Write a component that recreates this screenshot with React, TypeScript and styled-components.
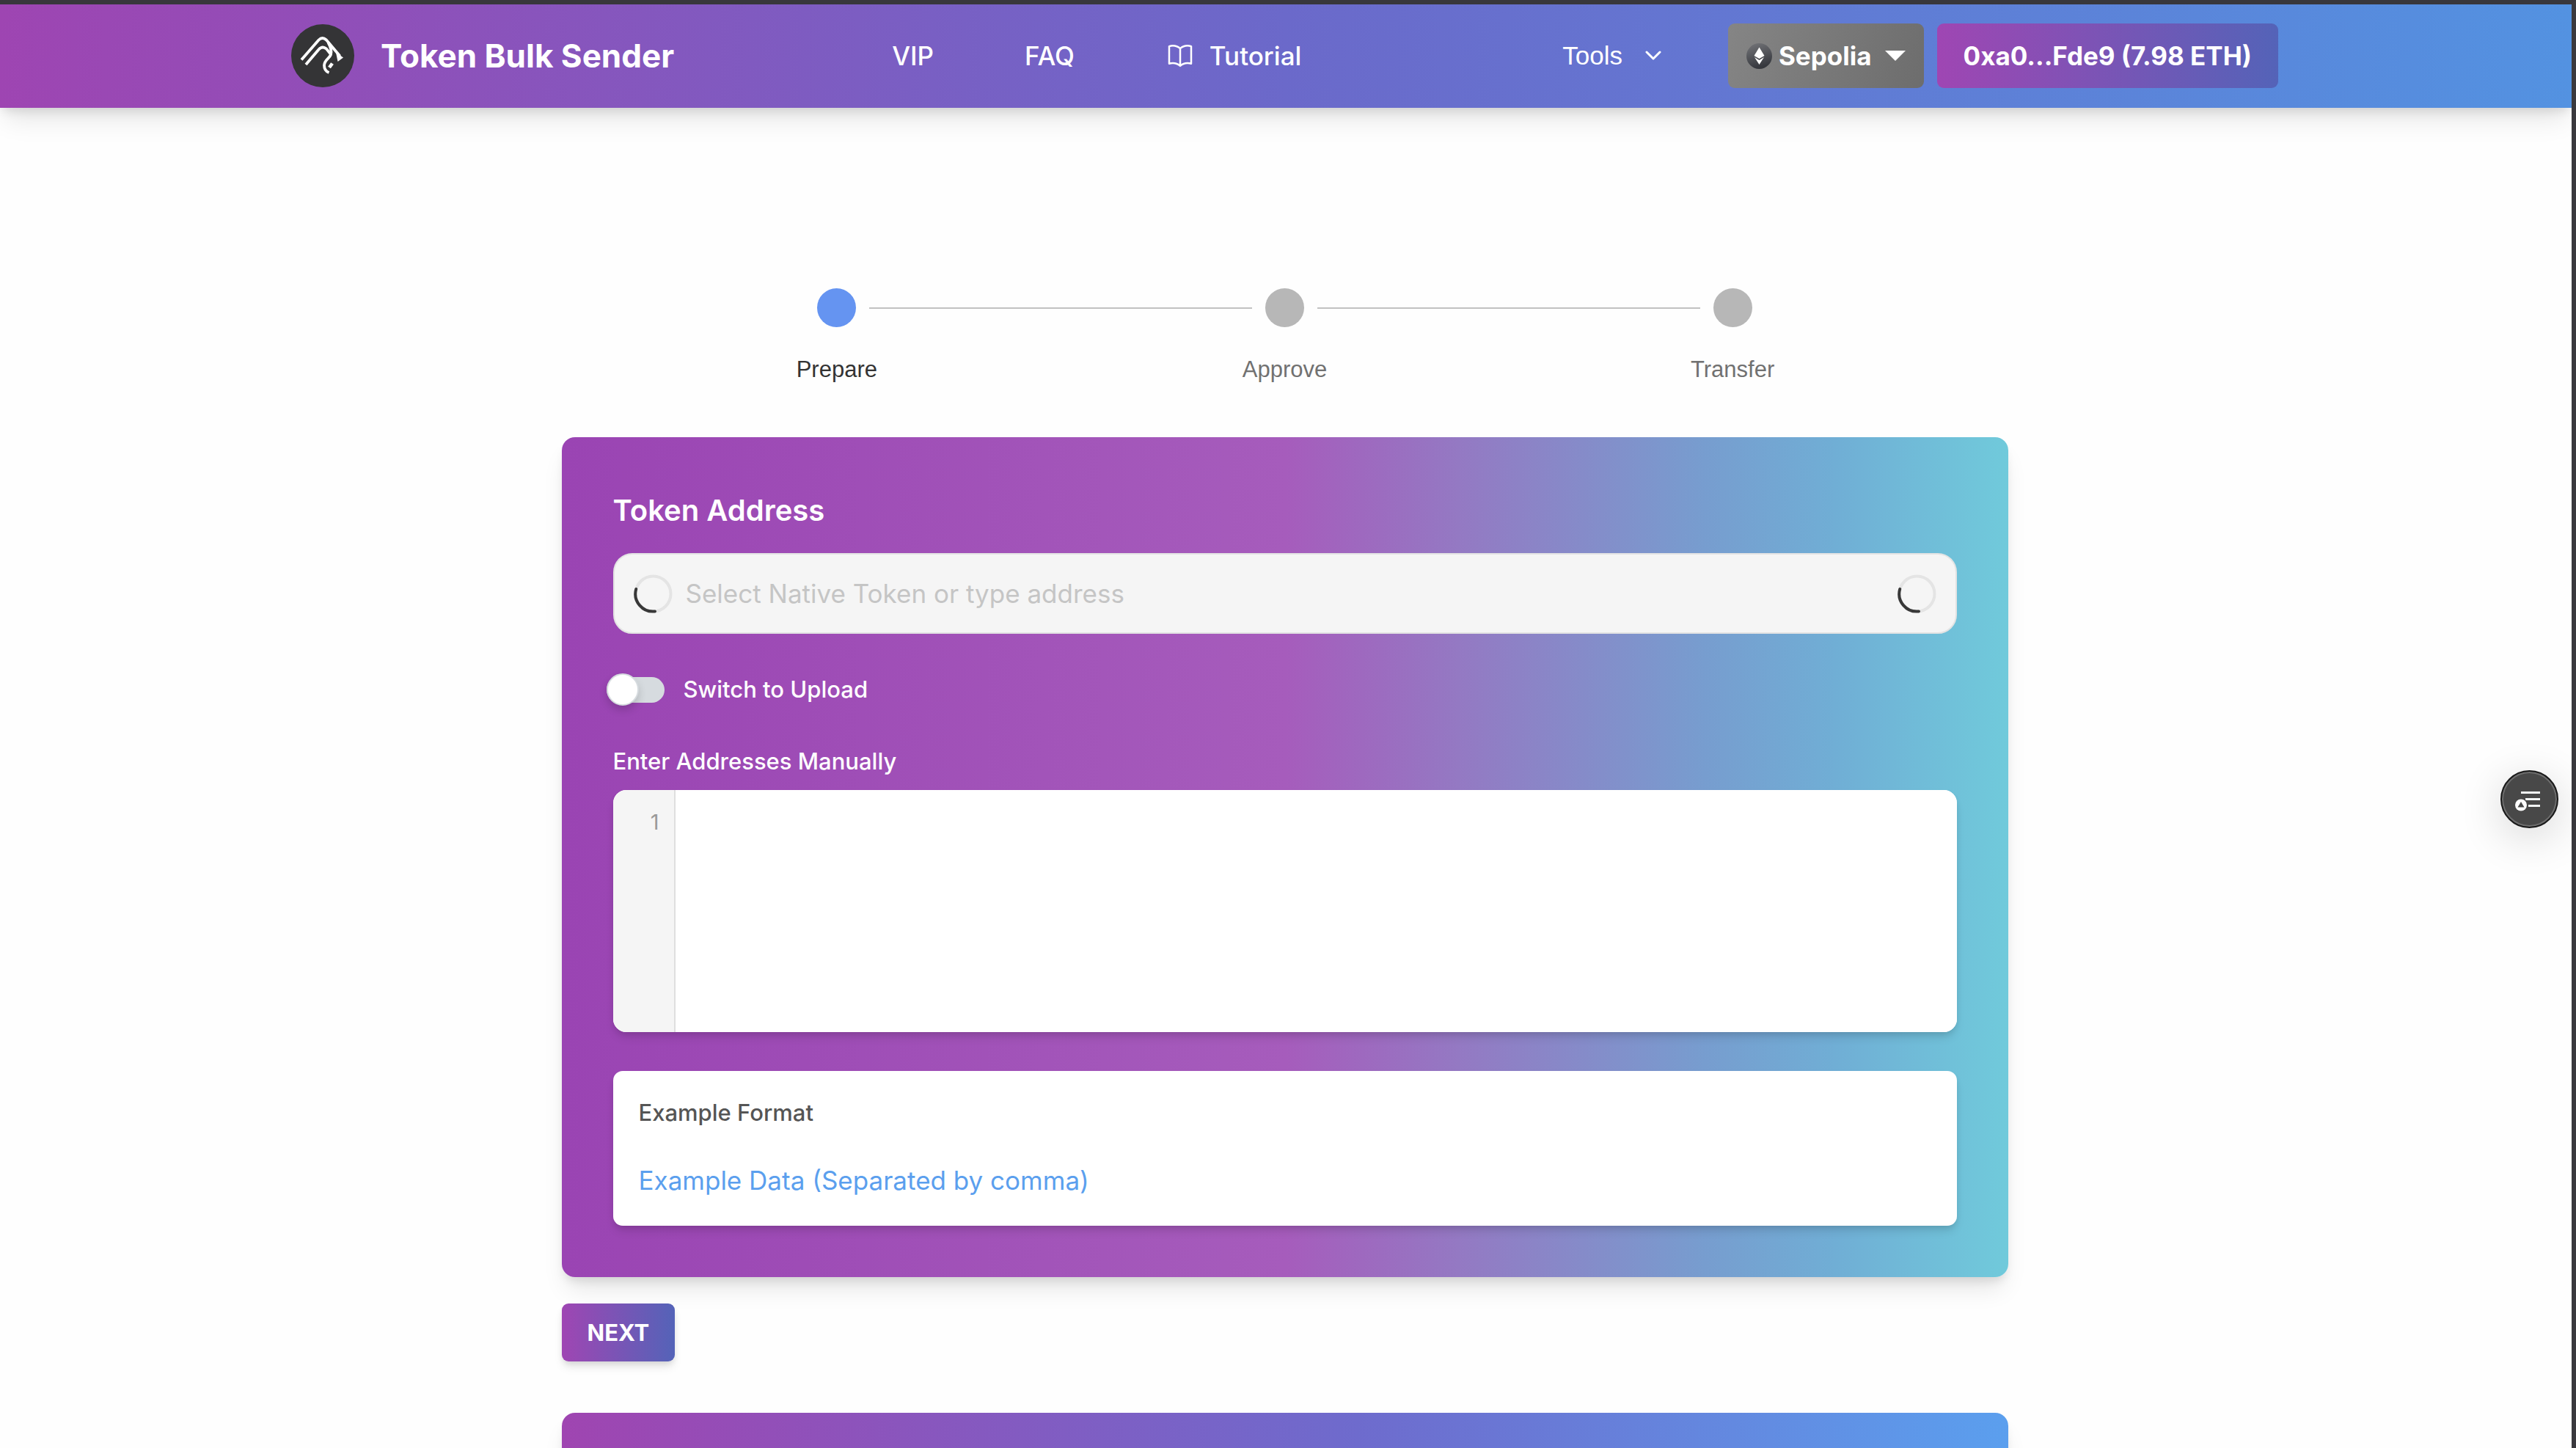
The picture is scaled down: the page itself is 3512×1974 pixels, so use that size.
import React from "react";
import styled, { createGlobalStyle, css } from "styled-components";

const Global = createGlobalStyle`
  *, *::before, *::after { box-sizing: border-box; }
  body {
    margin: 0;
    background: #fefefe;
    font-family: Inter, "Liberation Sans", sans-serif;
    font-size: 35px;
    line-height: 52px;
    -webkit-font-smoothing: antialiased;
  }
  h1, h2, p { margin: 0; }
  button, input, textarea { font-family: inherit; }
`;

const Frame = styled.div`
  display: flex;
  flex-direction: column;
  height: 100vh;
  overflow: hidden;
  border-top: 6px solid #38373c;
  border-right: 6px solid #3a393e;
`;

const Header = styled.header`
  flex: none;
  padding: 0 3px 1px 0;
  background: linear-gradient(to right, #9e45b2, #6b69ca 50%, #5392e1);
  box-shadow: 0 22px 33px -7px rgba(0, 0, 0, 0.1), 0 9px 13px -4px rgba(0, 0, 0, 0.1);
`;

const Bar = styled.div`
  display: flex;
  align-items: center;
  max-width: 2709px;
  height: 140px;
  margin: 0 auto;
`;

const Brand = styled.a`
  display: flex;
  align-items: center;
  gap: 36px;
  color: #fff;
  text-decoration: none;
  font-size: 44px;
  font-weight: 700;
`;

const Nav = styled.nav`
  display: flex;
  align-items: center;
  margin-left: 297px;
  gap: 124px;
`;

const NavLink = styled.a`
  display: flex;
  align-items: center;
  gap: 20px;
  color: #fff;
  text-decoration: none;
  font-weight: 500;
`;

const Actions = styled.div`
  display: flex;
  align-items: center;
  margin-left: auto;
  gap: 18px;
`;

const ToolsButton = styled.button`
  display: flex;
  align-items: center;
  gap: 31px;
  margin-right: 73px;
  padding: 0;
  border: 0;
  background: none;
  color: #fff;
  font-family: "Liberation Sans", Arial, sans-serif;
  font-size: 35px;
`;

const brandFill = css`
  background: linear-gradient(to right, #9f46b3, #5463b8);
`;

const BarButton = styled.button<{ $tone: "network" | "wallet" }>`
  display: flex;
  align-items: center;
  height: 88px;
  border: 0;
  border-radius: 9px;
  color: #fff;
  font-size: 35px;
  font-weight: 700;
  gap: 9px;
  ${({ $tone }) =>
    $tone === "network"
      ? css`
          padding: 0 25px;
          background: linear-gradient(110deg, #858585, #6d6d6d);
        `
      : css`
          padding: 0 36px;
          ${brandFill}
        `}
`;

const Caret = styled.span`
  margin-left: 9px;
  border: 14px solid transparent;
  border-top-color: #fff;
  border-bottom: 0;
`;

const Main = styled.main`
  flex: 1;
  width: 100%;
  padding: 246px 3px 0 0;
`;

const Column = styled.div`
  max-width: 1972px;
  margin: 0 auto;
`;

const Steps = styled.ol`
  display: grid;
  grid-template-columns: repeat(3, 1fr);
  margin: 0 70px;
  padding: 0;
  list-style: none;
  font-family: "Liberation Sans", Arial, sans-serif;
  font-size: 31px;
  line-height: 44px;
`;

const Step = styled.li<{ $active?: boolean }>`
  display: flex;
  flex-direction: column;
  align-items: center;
  gap: 36px;
  color: ${({ $active }) => ($active ? "#333" : "#717171")};
`;

const Rail = styled.div`
  display: flex;
  align-items: center;
  align-self: stretch;
  gap: 18px;
`;

const Line = styled.span<{ $shown: boolean }>`
  flex: 1;
  height: 2px;
  background: ${({ $shown }) => ($shown ? "#c1c1c1" : "transparent")};
`;

const Dot = styled.span<{ $active?: boolean }>`
  width: 53px;
  height: 53px;
  border-radius: 50%;
  background: ${({ $active }) => ($active ? "#6594f1" : "#b7b7b7")};
`;

const Card = styled.form`
  display: flex;
  flex-direction: column;
  margin-top: 70px;
  padding: 70px;
  border-radius: 18px;
  background: linear-gradient(
    to right,
    #9a44b3,
    #a65cbc 50%,
    #9479c3 62%,
    #779dcf 79%,
    #70aed5 88%,
    #70cadb
  );
  box-shadow: 0 22px 33px -7px rgba(0, 0, 0, 0.1), 0 9px 13px -4px rgba(0, 0, 0, 0.1);
`;

const TokenLabel = styled.label`
  color: #fff;
  font-size: 40px;
  font-weight: 600;
  line-height: 60px;
`;

const TokenField = styled.div`
  display: flex;
  align-items: center;
  gap: 18px;
  height: 110px;
  margin-top: 28px;
  padding: 0 26px;
  border: 2px solid #e3e3e3;
  border-radius: 26px;
  background: #f5f5f5;
`;

const TokenInput = styled.input`
  flex: 1;
  min-width: 0;
  padding: 0;
  border: 0;
  outline: 0;
  background: none;
  color: #333;
  font-size: 35px;
  &::placeholder { color: #c5c5c5; opacity: 1; }
`;

const SwitchRow = styled.label`
  display: flex;
  align-items: center;
  gap: 26px;
  margin: 53px 0 0 -9px;
  color: #fff;
  font-size: 31px;
  font-weight: 500;
  line-height: 46px;
`;

const Switch = styled.input`
  appearance: none;
  display: flex;
  align-items: center;
  width: 79px;
  height: 35px;
  margin: 0;
  border-radius: 18px;
  background: #d6dbdf;
  &::before {
    content: "";
    flex: none;
    width: 44px;
    height: 44px;
    border: 2px solid #d6dbdf;
    border-radius: 50%;
    background: #fff;
    box-shadow: 0 6px 12px rgba(0, 0, 0, 0.16);
  }
`;

const ManualLabel = styled.label`
  margin-top: 53px;
  color: #fff;
  font-size: 31px;
  font-weight: 500;
  line-height: 44px;
`;

const softShadow = css`
  box-shadow: 0 9px 13px -2px rgba(0, 0, 0, 0.1), 0 4px 9px -2px rgba(0, 0, 0, 0.1);
`;

const Editor = styled.div`
  display: flex;
  height: 330px;
  margin-top: 17px;
  border-radius: 18px;
  overflow: hidden;
  background: #fff;
  ${softShadow}
`;

const Gutter = styled.div`
  width: 85px;
  padding: 21px 20px;
  border-right: 2px solid #dfdfdf;
  background: #f5f5f5;
  color: #999;
  font-size: 29px;
  line-height: 46px;
  text-align: right;
`;

const EditorInput = styled.textarea`
  flex: 1;
  padding: 21px 20px;
  border: 0;
  outline: 0;
  resize: none;
  background: #fff;
  font-size: 29px;
  line-height: 46px;
`;

const Example = styled.section`
  display: flex;
  flex-direction: column;
  align-items: flex-start;
  gap: 44px;
  margin-top: 53px;
  padding: 35px;
  border-radius: 13px;
  background: #fff;
  ${softShadow}
`;

const ExampleTitle = styled.h2`
  color: #555;
  font-size: 31px;
  font-weight: 500;
  line-height: 44px;
`;

const ExampleLink = styled.a`
  color: #5b9fee;
  font-size: 35px;
  line-height: 53px;
  text-decoration: none;
`;

const NextButton = styled.button`
  display: block;
  height: 79px;
  margin-top: 36px;
  padding: 0 35px;
  border: 0;
  border-radius: 9px;
  color: #fff;
  font-size: 31px;
  font-weight: 700;
  ${brandFill}
  ${softShadow}
`;

const NextCard = styled.section`
  height: 400px;
  margin-top: 70px;
  border-radius: 18px;
  background: linear-gradient(to right, #9f45b1, #6e6bcd 55%, #5b9fee);
  box-shadow: 0 22px 33px -7px rgba(0, 0, 0, 0.1), 0 9px 13px -4px rgba(0, 0, 0, 0.1);
`;

const Floating = styled.button`
  position: fixed;
  top: 1050px;
  right: 24px;
  display: grid;
  place-items: center;
  width: 79px;
  height: 79px;
  padding: 0;
  border: 2px solid #1a1a1a;
  border-radius: 50%;
  background: #484848;
  box-shadow: inset 0 0 0 2px #6e6e6e, 0 13px 60px rgba(0, 0, 0, 0.16);
`;

const Logo = () => (
  <svg width="86" height="86" viewBox="0 0 86 86" fill="none" stroke="#fff" strokeWidth="3.8" aria-hidden="true">
    <circle cx="43" cy="43" r="43" fill="#343436" stroke="none" />
    <path d="M14 48.500L37.500 21.500Q42.500 16.500 48 21.500L66.500 43.500" />
    <path d="M20 55L37.500 34.500Q42.500 29 48 33.500L54 41" />
    <path d="M50.500 25Q56 35 54 41.500C52 47 45.500 48 45 56Q45 63.500 51.500 66" />
    <path d="M61 38.500L71 45.500L63.500 51Z" fill="#fff" stroke="none" />
    <path d="M56 53.500L52 59" strokeWidth="4.600" />
  </svg>
);

const Book = () => (
  <svg width="40" height="40" viewBox="0 0 24 24" fill="none" stroke="#fff" strokeWidth="1.5" strokeLinecap="round" strokeLinejoin="round" aria-hidden="true">
    <path d="M12 6.042A8.967 8.967 0 0 0 6 3.75c-1.052 0-2.062.18-3 .512v14.25A8.987 8.987 0 0 1 6 18c2.305 0 4.408.867 6 2.292m0-14.25a8.966 8.966 0 0 1 6-2.292c1.052 0 2.062.18 3 .512v14.25A8.987 8.987 0 0 0 18 18a8.967 8.967 0 0 0-6 2.292m0-14.25v14.25" />
  </svg>
);

const Chevron = () => (
  <svg width="22" height="14" viewBox="0 0 22 14" fill="none" stroke="#fff" strokeWidth="3" strokeLinecap="round" strokeLinejoin="round" aria-hidden="true">
    <path d="M2 2l9 9 9-9" />
  </svg>
);

const Ether = () => (
  <svg width="35" height="35" viewBox="0 0 35 35" aria-hidden="true">
    <defs>
      <linearGradient id="coin" x1="0" y1="0" x2="0.3" y2="1">
        <stop offset="0" stopColor="#75767a" />
        <stop offset="1" stopColor="#36383e" />
      </linearGradient>
    </defs>
    <circle cx="17.5" cy="17.5" r="17.5" fill="url(#coin)" />
    <path d="M17.500 5.500l7 11.500-7 4-7-4z" fill="#fff" />
    <path d="M11 19l6.500 4 6.500-4-6.500 10z" fill="#fff" />
  </svg>
);

const Spinner = () => (
  <svg width="53" height="53" viewBox="0 0 53 53" fill="none" strokeWidth="4" strokeLinecap="round" aria-hidden="true">
    <circle cx="26.5" cy="26.5" r="24" stroke="#e4e4e4" />
    <path d="M29 50.4A24 24 0 0 1 3.2 20" stroke="#383838" />
  </svg>
);

const ListIcon = () => (
  <svg width="40" height="32" viewBox="0 0 40 32" aria-hidden="true">
    <path d="M8 6.500h26M14 15.500h20M18 24.500h16" stroke="#f2f6f6" strokeWidth="3" />
    <circle cx="8" cy="23.5" r="9.5" fill="#484848" />
    <circle cx="8" cy="23.5" r="8" fill="#fff" />
    <path d="M8 19l4.500 7.500h-9z" fill="#484848" />
  </svg>
);

const steps = ["Prepare", "Approve", "Transfer"];

export default function App() {
  return (
    <>
      <Global />
      <Frame>
        <Header>
          <Bar>
            <Brand href="#">
              <Logo />
              Token Bulk Sender
            </Brand>
            <Nav>
              <NavLink href="#vip">VIP</NavLink>
              <NavLink href="#faq">FAQ</NavLink>
              <NavLink href="#tutorial">
                <Book />
                Tutorial
              </NavLink>
            </Nav>
            <Actions>
              <ToolsButton type="button">
                Tools
                <Chevron />
              </ToolsButton>
              <BarButton type="button" $tone="network">
                <Ether />
                Sepolia
                <Caret />
              </BarButton>
              <BarButton type="button" $tone="wallet">0xa0...Fde9 (7.98 ETH)</BarButton>
            </Actions>
          </Bar>
        </Header>
        <Main>
          <Column>
            <Steps>
              {steps.map((name, i) => (
                <Step key={name} $active={i === 0}>
                  <Rail>
                    <Line $shown={i > 0} />
                    <Dot $active={i === 0} />
                    <Line $shown={i < steps.length - 1} />
                  </Rail>
                  {name}
                </Step>
              ))}
            </Steps>
            <Card>
              <TokenLabel htmlFor="token">Token Address</TokenLabel>
              <TokenField>
                <Spinner />
                <TokenInput id="token" type="text" placeholder="Select Native Token or type address" />
                <Spinner />
              </TokenField>
              <SwitchRow>
                <Switch type="checkbox" role="switch" />
                Switch to Upload
              </SwitchRow>
              <ManualLabel htmlFor="addresses">Enter Addresses Manually</ManualLabel>
              <Editor>
                <Gutter>1</Gutter>
                <EditorInput id="addresses" />
              </Editor>
              <Example>
                <ExampleTitle>Example Format</ExampleTitle>
                <ExampleLink href="#example">Example Data (Separated by comma)</ExampleLink>
              </Example>
            </Card>
            <NextButton type="button">NEXT</NextButton>
            <NextCard />
          </Column>
        </Main>
        <Floating type="button" aria-label="Open list">
          <ListIcon />
        </Floating>
      </Frame>
    </>
  );
}
